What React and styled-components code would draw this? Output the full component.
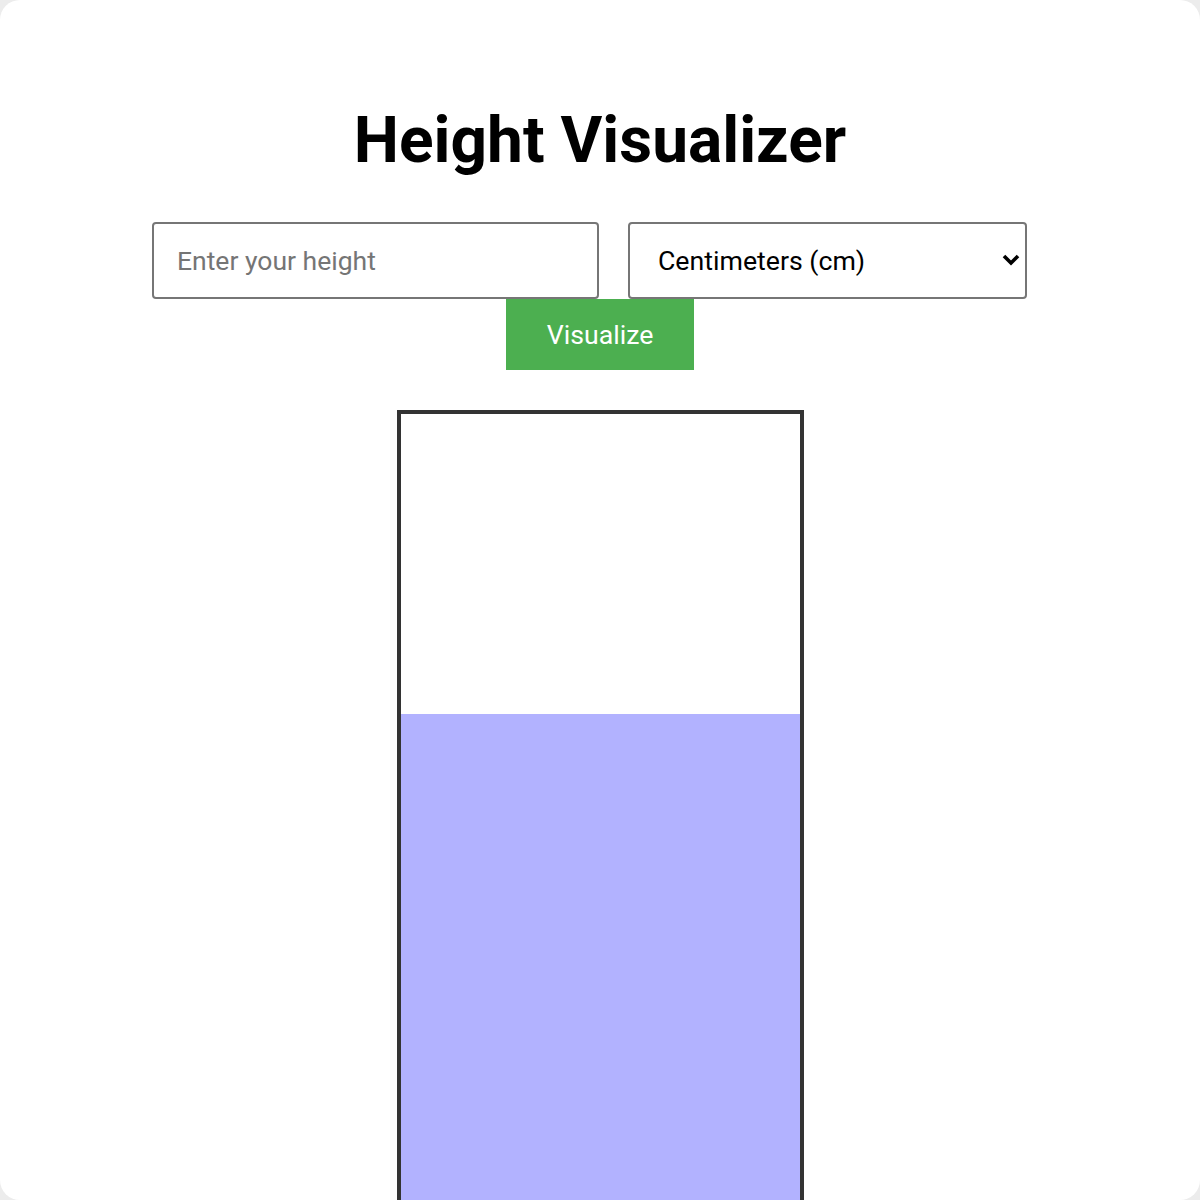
import React, { useState } from 'react'
import styled, { createGlobalStyle } from 'styled-components'

const GlobalStyle = createGlobalStyle`
    body {
        margin: 0;
        background: #ececec;
        font-family: Roboto, 'Liberation Sans', sans-serif;
    }
`

const Card = styled.div`
    background: #fff;
    border-radius: 20px;
    height: 1200px;
    overflow: hidden;
    padding-top: 101px;
    box-sizing: border-box;
    display: flex;
    flex-direction: column;
    align-items: center;

    & > * {
        flex-shrink: 0;
    }
`

const Title = styled.h1`
    margin: 0 0 41px;
    font-size: 64px;
    line-height: 80px;
    font-weight: 700;
    color: #000;
`

const Controls = styled.div`
    display: flex;
    justify-content: center;
    gap: 29px;
    width: 100%;
    padding-right: 21px;
    box-sizing: border-box;
`

const HeightInput = styled.input`
    width: 447px;
    height: 77px;
    box-sizing: border-box;
    border: 2px solid #767676;
    border-radius: 4px;
    padding: 0 23px;
    font-family: Roboto, 'Liberation Sans', sans-serif;
    font-size: 26.5px;
    color: #000;
    outline: none;

    &::placeholder {
        color: #757575;
    }
`

const SelectWrap = styled.div`
    position: relative;
    width: 399px;
    height: 77px;
`

const UnitSelect = styled.select`
    appearance: none;
    width: 100%;
    height: 100%;
    box-sizing: border-box;
    border: 2px solid #767676;
    border-radius: 4px;
    padding: 0 50px 0 28px;
    font-family: Roboto, 'Liberation Sans', sans-serif;
    font-size: 26.7px;
    color: #000;
    background: #fff;
`

const Chevron = styled.svg`
    position: absolute;
    right: 6px;
    top: 31px;
    width: 20px;
    height: 14px;
    pointer-events: none;
`

const VisualizeButton = styled.button`
    width: 188px;
    height: 71px;
    border: none;
    background: #4caf50;
    color: #fff;
    font-family: Roboto, 'Liberation Sans', sans-serif;
    font-size: 26.7px;
    cursor: pointer;
`

const Bar = styled.div`
    margin-top: 40px;
    width: 407px;
    height: 1000px;
    box-sizing: border-box;
    border: 4px solid #333;
    display: flex;
    flex-direction: column;
    justify-content: flex-end;
`

const Fill = styled.div`
    width: 100%;
    background: rgba(0, 0, 255, 0.3);
`

const App = () => {
    const [height, setHeight] = useState('')
    const [unit, setUnit] = useState('cm')
    const fillPx = 692

    return (
        <>
            <GlobalStyle />
            <Card>
                <Title>Height Visualizer</Title>
                <Controls>
                    <HeightInput
                        type='number'
                        placeholder='Enter your height'
                        value={height}
                        onChange={e => setHeight(e.target.value)}
                    />
                    <SelectWrap>
                        <UnitSelect value={unit} onChange={e => setUnit(e.target.value)}>
                            <option value='cm'>Centimeters (cm)</option>
                            <option value='m'>Meters (m)</option>
                            <option value='in'>Inches (in)</option>
                            <option value='ft'>Feet (ft)</option>
                        </UnitSelect>
                        <Chevron viewBox='0 0 20 14'>
                            <path d='M3 3 L10 10 L17 3' fill='none' stroke='#000' strokeWidth='3.6' />
                        </Chevron>
                    </SelectWrap>
                </Controls>
                <VisualizeButton>Visualize</VisualizeButton>
                <Bar>
                    <Fill style={{ height: fillPx }} />
                </Bar>
            </Card>
        </>
    )
}

export default App
